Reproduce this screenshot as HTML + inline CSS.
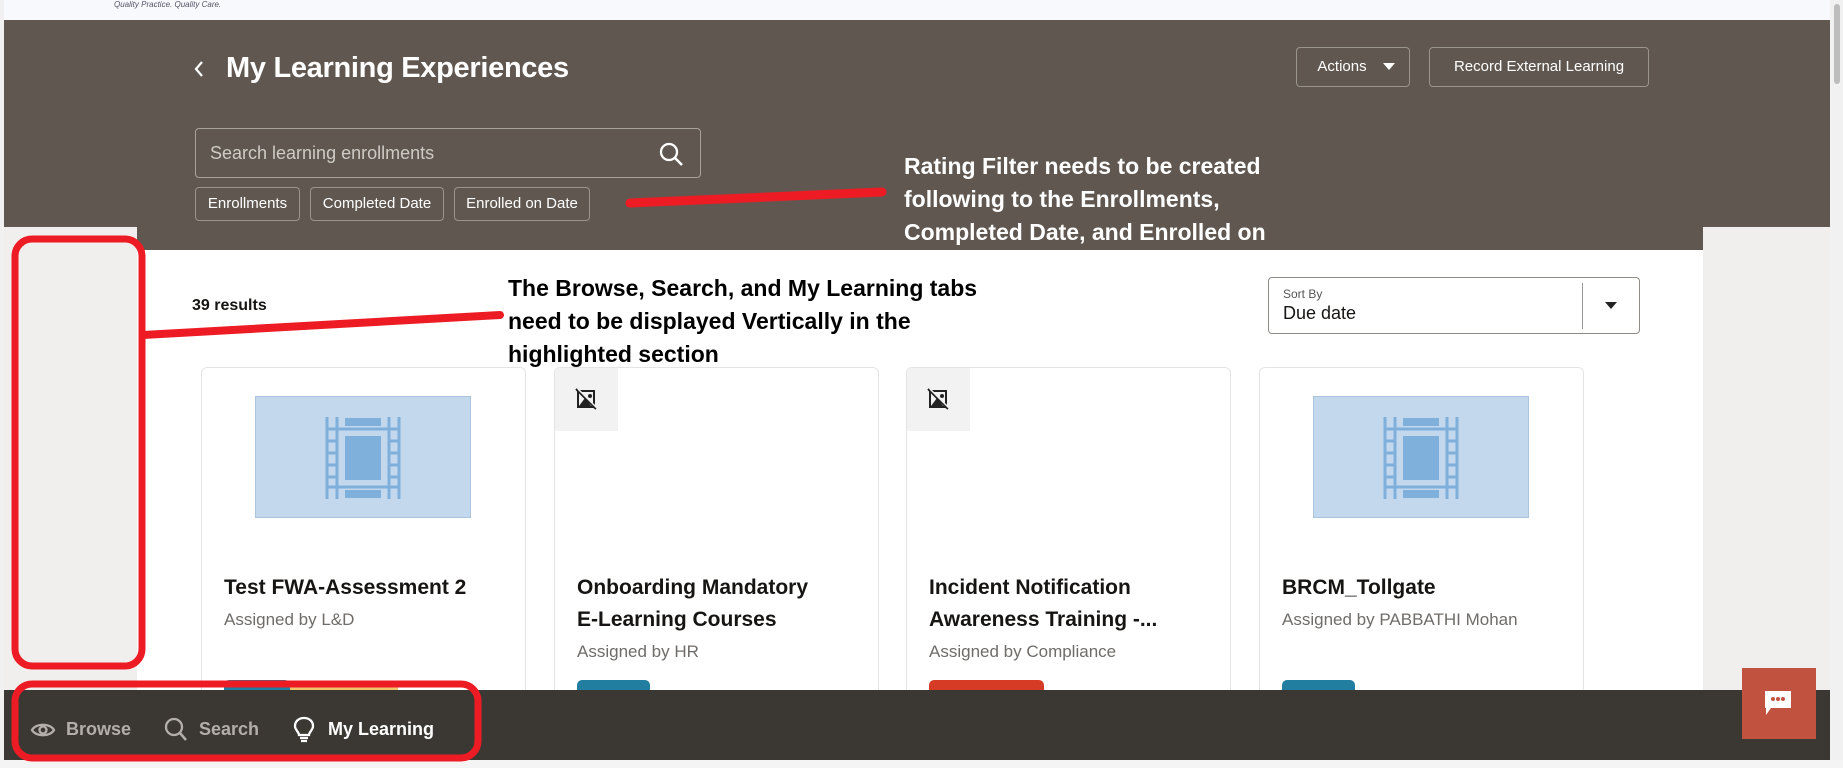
<!DOCTYPE html>
<html><head><meta charset="utf-8"><style>
*{margin:0;padding:0;box-sizing:border-box}
body{width:1843px;height:768px;overflow:hidden;background:#f9f9fb;font-family:"Liberation Sans",sans-serif;position:relative}
.abs{position:absolute}
.ann{font-family:"Liberation Sans Narrow","Liberation Sans",sans-serif;font-weight:bold;font-size:23px;line-height:33px}
.chip{position:absolute;top:187px;height:34px;border:1px solid #9a948e;border-radius:4px;color:#fff;font-size:15px;line-height:32px;text-align:center}
.btn{position:absolute;top:47px;height:40px;border:1px solid #9a948e;border-radius:4px;color:#fff;font-size:15px;line-height:38px;text-align:center}
.card{position:absolute;top:367px;height:340px;width:325px;background:#fff;border:1px solid #e4e4e4;border-radius:6px}
.ttl{position:absolute;left:22px;top:204px;font-size:21px;font-weight:bold;color:#161513;line-height:32px;width:262px}
.sub{font-size:17px;color:#6f6c69;font-weight:normal;line-height:32px}
.noimg{position:absolute;left:0;top:0;width:63px;height:63px;background:#f2f2f2;border-radius:6px 0 0 0}
.film{position:absolute;left:53px;top:28px;width:216px;height:122px;background:#c3d8ec;border:1px solid #aac4de}
.badge{position:absolute;left:22px;top:312px;height:30px;border-radius:5px}
</style></head><body>
<div class="abs" style="left:0;top:0;width:1843px;height:20px;background:#f8f9fd"></div>
<div class="abs" style="left:114px;top:0;font-size:8px;color:#556;font-style:italic">Quality Practice. Quality Care.</div>
<div class="abs" style="left:4px;top:20px;width:1826px;height:230px;background:#605850"></div>
<div class="abs" style="left:1830px;top:0;width:13px;height:768px;background:#f1f1f1"></div>
<div class="abs" style="left:1834px;top:4px;width:6px;height:80px;background:#bdbdbd;border-radius:3px"></div>
<div class="abs" style="left:4px;top:227px;width:133px;height:470px;background:#f0efed"></div>
<div class="abs" style="left:1703px;top:227px;width:127px;height:470px;background:#f0efed"></div>
<div class="abs" style="left:137px;top:250px;width:1566px;height:450px;background:#fff"></div>
<div class="abs" style="left:0;top:0;width:4px;height:768px;background:#f1f1f1"></div>

<svg class="abs" style="left:190px;top:58px" width="16" height="22"><path d="M12 4 L6 11 L12 18" stroke="#fff" stroke-width="2.2" fill="none"/></svg>
<div class="abs" style="left:226px;top:52px;font-size:29px;font-weight:bold;color:#fff;letter-spacing:-0.3px">My Learning Experiences</div>
<div class="btn" style="left:1296px;width:114px;padding-right:22px">Actions<svg class="abs" style="left:86px;top:15px" width="12" height="8"><path d="M0 0H12L6 7Z" fill="#fff"/></svg></div>
<div class="btn" style="left:1429px;width:220px">Record External Learning</div>

<div class="abs" style="left:195px;top:128px;width:506px;height:50px;border:1px solid #a8a29c;border-radius:4px;color:#cfcac5;font-size:18px;line-height:48px;padding-left:14px">Search learning enrollments
<svg class="abs" style="left:462px;top:12px" width="26" height="26"><circle cx="11" cy="11" r="8" stroke="#fff" stroke-width="2.3" fill="none"/><path d="M17 17L24 24" stroke="#fff" stroke-width="2.5"/></svg></div>
<div class="chip" style="left:195px;width:105px">Enrollments</div>
<div class="chip" style="left:310px;width:134px">Completed Date</div>
<div class="chip" style="left:454px;width:136px">Enrolled on Date</div>

<svg class="abs" style="left:0;top:0" width="1843" height="768">
<path d="M630 203 L882 192" stroke="#ed1c24" stroke-width="9" stroke-linecap="round"/>
<path d="M143 335 L500 315" stroke="#ed1c24" stroke-width="8" stroke-linecap="round"/>
<rect x="15" y="239" width="127" height="427" rx="17" fill="none" stroke="#ed1c24" stroke-width="7"/>
</svg>
<div class="abs ann" style="left:904px;top:150px;color:#fff;height:100px;overflow:hidden">Rating Filter needs to be created<br>following to the Enrollments,<br>Completed Date, and Enrolled on</div>
<div class="abs ann" style="left:508px;top:272px;color:#000">The Browse, Search, and My Learning tabs<br>need to be displayed Vertically in the<br>highlighted section</div>
<div class="abs" style="left:192px;top:297px;font-size:16px;font-weight:bold;color:#161513">39 results</div>

<div class="abs" style="left:1268px;top:277px;width:372px;height:57px;border:1px solid #8f8b87;border-radius:4px;background:#fff">
<div class="abs" style="left:14px;top:9px;font-size:12px;color:#555">Sort By</div>
<div class="abs" style="left:14px;top:25px;font-size:18px;color:#161513">Due date</div>
<div class="abs" style="left:313px;top:5px;width:1px;height:46px;background:#999"></div>
<svg class="abs" style="left:336px;top:24px" width="12" height="8"><path d="M0 0H12L6 7Z" fill="#222"/></svg>
</div>

<svg width="0" height="0" style="position:absolute"><defs>
<g id="fi"><g fill="none" stroke="#7fb0dc" stroke-width="3"><path d="M3 0V82M13 0V82M65 0V82M75 0V82M13 12H65M13 70H65"/><path d="M3 12H13M3 24H13M3 36H13M3 48H13M3 60H13M3 70H13M65 12H75M65 24H75M65 36H75M65 48H75M65 60H75M65 70H75"/></g>
<rect x="21" y="1" width="36" height="8" fill="#7fb0dc"/><rect x="21" y="73" width="36" height="8" fill="#7fb0dc"/><rect x="21" y="19" width="36" height="44" fill="#7fb0dc"/></g>
<g id="ni"><rect x="4" y="4" width="16" height="16" fill="none" stroke="#222" stroke-width="2"/><path d="M5 19L11 11L17 19Z" fill="#222"/><circle cx="16" cy="9" r="2" fill="#222"/><path d="M2 2L22 22" stroke="#222" stroke-width="2"/><path d="M4 2L24 22" stroke="#f2f2f2" stroke-width="1.5"/></g>
</defs></svg>

<div class="card" style="left:201px"><div class="film"><svg class="abs" style="left:68px;top:20px" width="80" height="84"><use href="#fi"/></svg></div>
<div class="ttl">Test FWA-Assessment 2<div class="sub">Assigned by L&amp;D</div></div>
<div class="badge" style="width:66px;background:#227ea0"></div><div class="abs" style="left:88px;top:318px;width:108px;height:5px;background:#f0c46c"></div></div>
<div class="card" style="left:554px"><div class="noimg"><svg class="abs" style="left:19px;top:19px" width="26" height="26"><use href="#ni"/></svg></div>
<div class="ttl">Onboarding Mandatory E&#8209;Learning Courses<div class="sub">Assigned by HR</div></div>
<div class="badge" style="width:73px;background:#227ea0"></div></div>
<div class="card" style="left:906px"><div class="noimg"><svg class="abs" style="left:19px;top:19px" width="26" height="26"><use href="#ni"/></svg></div>
<div class="ttl">Incident Notification Awareness Training -...<div class="sub">Assigned by Compliance</div></div>
<div class="badge" style="width:115px;background:#d63b25"></div></div>
<div class="card" style="left:1259px"><div class="film"><svg class="abs" style="left:68px;top:20px" width="80" height="84"><use href="#fi"/></svg></div>
<div class="ttl">BRCM_Tollgate<div class="sub">Assigned by PABBATHI Mohan</div></div>
<div class="badge" style="width:73px;background:#227ea0"></div></div>

<div class="abs" style="left:4px;top:690px;width:1826px;height:70px;background:#3b3733"></div>
<div class="abs" style="left:0;top:760px;width:1843px;height:8px;background:#f4f4f4"></div>
<svg class="abs" style="left:30px;top:717px" width="26" height="26"><path d="M2 13C6 6 20 6 24 13C20 20 6 20 2 13Z" fill="none" stroke="#b3aea9" stroke-width="2.3"/><circle cx="13" cy="13" r="3.5" fill="none" stroke="#b3aea9" stroke-width="2.3"/></svg>
<div class="abs" style="left:66px;top:719px;font-size:18px;font-weight:bold;color:#b3aea9">Browse</div>
<svg class="abs" style="left:163px;top:716px" width="26" height="28"><circle cx="11" cy="11" r="8" fill="none" stroke="#b3aea9" stroke-width="2.3"/><path d="M17 17L23 24" stroke="#b3aea9" stroke-width="2.5"/></svg>
<div class="abs" style="left:199px;top:719px;font-size:18px;font-weight:bold;color:#b3aea9">Search</div>
<svg class="abs" style="left:293px;top:716px" width="22" height="28"><path d="M11 2C5 2 2 6 2 10C2 14 6 16 6 19H16C16 16 20 14 20 10C20 6 17 2 11 2Z" fill="none" stroke="#fff" stroke-width="2.3"/><path d="M7 22H15M8 25H14" stroke="#fff" stroke-width="2.2"/></svg>
<div class="abs" style="left:328px;top:719px;font-size:18px;font-weight:bold;color:#fff">My Learning</div>
<svg class="abs" style="left:0;top:0" width="600" height="768"><rect x="15" y="684" width="463" height="74" rx="17" fill="none" stroke="#ed1c24" stroke-width="7"/></svg>

<div class="abs" style="left:1742px;top:668px;width:74px;height:71px;background:#c0523f"></div>
<svg class="abs" style="left:1762px;top:688px" width="32" height="30"><path d="M3 3H29V20H9L4 27V20H3Z" fill="#fff"/><circle cx="11" cy="11" r="2" fill="#c0523f"/><circle cx="16" cy="11" r="2" fill="#c0523f"/><circle cx="21" cy="11" r="2" fill="#c0523f"/></svg>
</body></html>
